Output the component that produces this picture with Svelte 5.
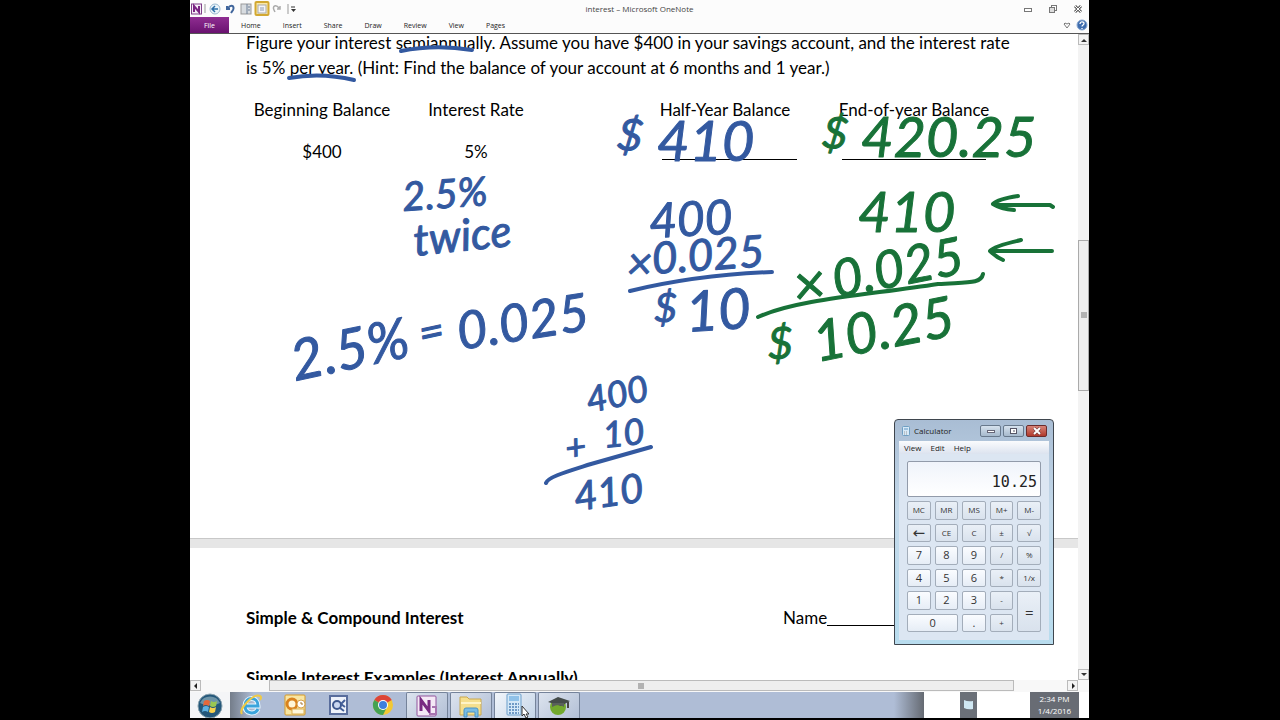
<script>
  const tabs = ["Home", "Insert", "Share", "Draw", "Review", "View", "Pages"];

  const keys = [
    { label: "MC" }, { label: "MR" }, { label: "MS" }, { label: "M+" }, { label: "M-" },
    { label: "←", kind: "back" }, { label: "CE" }, { label: "C" }, { label: "±" }, { label: "√" },
    { label: "7", kind: "digit" }, { label: "8", kind: "digit" }, { label: "9", kind: "digit" }, { label: "/" }, { label: "%" },
    { label: "4", kind: "digit" }, { label: "5", kind: "digit" }, { label: "6", kind: "digit" }, { label: "*" }, { label: "1/x" },
    { label: "1", kind: "digit" }, { label: "2", kind: "digit" }, { label: "3", kind: "digit" }, { label: "-" }, { label: "=", kind: "equals" },
    { label: "0", kind: "digit zero" }, { label: ".", kind: "digit" }, { label: "+" },
  ];

  // pen notes: baseline start, size and slant
  const blue = [
    { t: "$", x: 616, y: 149, s: 44, r: 6 },
    { t: "410", x: 657, y: 161, s: 56, r: 0 },
    { t: "2.5%", x: 403, y: 211, s: 40, r: -4 },
    { t: "twice", x: 415, y: 256, s: 44, r: -6 },
    { t: "400", x: 650, y: 238, s: 48, r: -3 },
    { t: "×", x: 627, y: 279, s: 44, r: 0 },
    { t: "0.025", x: 653, y: 274, s: 44, r: -4 },
    { t: "$", x: 654, y: 322, s: 40, r: 0 },
    { t: "10", x: 687, y: 332, s: 56, r: -4 },
    { t: "2.5%", x: 295, y: 381, s: 56, r: -12 },
    { t: "=", x: 422, y: 349, s: 44, r: -12 },
    { t: "0.025", x: 460, y: 350, s: 52, r: -9 },
    { t: "400", x: 589, y: 413, s: 36, r: -12 },
    { t: "10", x: 604, y: 448, s: 36, r: -6 },
    { t: "+", x: 567, y: 461, s: 36, r: -8 },
    { t: "410", x: 576, y: 511, s: 40, r: -8 },
  ];
  const green = [
    { t: "$", x: 821, y: 147, s: 44, r: 6 },
    { t: "420.25", x: 861, y: 157, s: 56, r: 0 },
    { t: "410", x: 858, y: 232, s: 56, r: 0 },
    { t: "×", x: 796, y: 306, s: 56, r: -8 },
    { t: "0.025", x: 836, y: 298, s: 52, r: -11 },
    { t: "$", x: 768, y: 359, s: 44, r: -2 },
    { t: "10.25", x: 817, y: 362, s: 56, r: -11 },
  ];
</script>

{#snippet notes(list)}
  {#each list as n}
    <text x={n.x} y={n.y} font-size={n.s} transform="rotate({n.r} {n.x} {n.y})">{n.t}</text>
  {/each}
{/snippet}

<main class="screen">
  <header class="titlebar">
    <div class="quick">
      <svg width="110" height="16" viewBox="0 0 110 16">
        <rect x="1.500" y="3" width="10" height="10" fill="#f5edf6" stroke="#7f3f88" />
        <path d="M4 11V5l5 6V5" fill="none" stroke="#7a2383" stroke-width="2" />
        <path d="M15 3v9M98 3v10" stroke="#999" />
        <circle cx="25" cy="8" r="5" fill="#eaf4fa" stroke="#9bb9cf" />
        <path d="M28 8h-6m3-3-3 3 3 3" fill="none" stroke="#2d6fa8" stroke-width="1.500" />
        <path d="M37 5v3h3M38 7c3-4 7-2 5 2l-2 3" fill="none" stroke="#41669c" stroke-width="2" />
        <rect x="51" y="3" width="10" height="10" fill="#d8dce0" stroke="#999" />
        <path d="M57 3v10M58 6h2M58 9h2" stroke="#6d7f96" />
        <rect x="65.500" y="1" width="13" height="13" rx="1" fill="#fbe9a8" stroke="#d2a832" stroke-width="2" />
        <rect x="68" y="4" width="8" height="8" fill="#f5f5f8" stroke="#aaa" />
        <path d="M70 7h4M70 9h4" stroke="#8c9ab0" />
        <path d="M90 5v3h-3M89 7c-3-4-7-2-5 2l1 2" fill="none" stroke="#aaa" stroke-width="1.500" />
        <path d="M101 6h4" stroke="#333" />
        <path d="M101 8h5l-2.500 3z" fill="#333" />
      </svg>
    </div>
    <h1>interest – Microsoft OneNote</h1>
    <div class="winbtns">
      <button aria-label="Minimize"><svg width="10" height="10"><rect x="1.500" y="4.500" width="7" height="3" fill="#fff" stroke="#777" /></svg></button>
      <button aria-label="Restore"><svg width="10" height="10"><rect x="3.500" y="1.500" width="5" height="5" fill="#fff" stroke="#777" /><rect x="1.500" y="3.500" width="5" height="5" fill="#ddd" stroke="#777" /></svg></button>
      <button aria-label="Close"><svg width="10" height="10"><path d="m2 2 6 6M8 2 2 8" stroke="#666" stroke-width="3" /><path d="m2 2 6 6M8 2 2 8" stroke="#fff" /></svg></button>
    </div>
  </header>

  <nav class="ribbon">
    <button class="file">File</button>
    {#each tabs as tab}
      <button class="tab">{tab}</button>
    {/each}
    <div class="help">
      <button aria-label="Show ribbon"><svg width="10" height="10"><path d="m2 4 1-1 2 1 2-1 1 1-3 4z" fill="#fff" stroke="#777" /></svg></button>
      <button aria-label="Help"><svg width="12" height="12"><circle cx="6" cy="6" r="5" fill="#3f6dae" stroke="#8aa8d0" /><path d="M4 5c0-3 4-2.500 4-.5C8 6 6 6 6 7.500M6 9v1" fill="none" stroke="#fff" stroke-width="1.300" /></svg></button>
    </div>
  </nav>

  <div class="workspace">
    <div class="document">
      <section class="page first">
        <p>
          Figure your interest semiannually. Assume you have $400 in your savings account, and the interest rate<br />
          is 5% per year. (Hint: Find the balance of your account at 6 months and 1 year.)
        </p>
        <table>
          <thead>
            <tr><th class="begin">Beginning Balance</th><th class="rate">Interest Rate</th><th class="half">Half-Year Balance</th><th>End-of-year Balance</th></tr>
          </thead>
          <tbody>
            <tr><td>$400</td><td>5%</td><td class="half"><span class="blank"></span></td><td><span class="blank wide"></span></td></tr>
          </tbody>
        </table>
      </section>
      <section class="page second">
        <div class="heading">
          <h2>Simple &amp; Compound Interest</h2>
          <span class="name">Name<span class="name-line"></span></span>
        </div>
        <h2>Simple Interest Examples (Interest Annually)</h2>
      </section>

      <svg class="ink" width="888" height="646" viewBox="190 34 888 646">
        <g class="blue">
          {@render notes(blue)}
          <path d="M401 51q34-7 71-1M289 78q32-6 65 2" />
          <path d="M630 291q66-16 142-19M546 483c2-6 20-11 45-19l60-17" />
        </g>
        <g class="green">
          {@render notes(green)}
          <path d="M758 317c40-18 110-22 180-33 30-2 43 0 45-10" />
          <path d="M1053 207l-3-2h-54M1018 196q-20 3-25 8 8 5 21 6M1052 251h-60M1021 240q-27 6-31 11 6 6 13 9" />
        </g>
      </svg>
    </div>

    <div class="vscroll">
      <button aria-label="Scroll up"><svg width="8" height="8"><path d="m1 6 3-3 3 3z" fill="#333" /></svg></button>
      <div class="vthumb"><svg width="6" height="7"><path d="M0 1h6M0 3h6M0 5h6" stroke="#777" /></svg></div>
      <button aria-label="Scroll down"><svg width="8" height="8"><path d="m1 2 3 3 3-3z" fill="#333" /></svg></button>
    </div>

    <aside class="calculator">
      <div class="calc-title">
        <svg width="8" height="10"><rect x=".5" y=".5" width="7" height="9" rx="1" fill="#d7eaf8" stroke="#6f9fc2" /><path d="M2 3h4" stroke="#9cc0de" stroke-width="2" /><path d="M2 6h4M2 8h4" stroke="#999" stroke-dasharray="1 1" /></svg>
        <span>Calculator</span>
        <button class="min" aria-label="Minimize calculator"><svg width="10" height="8"><rect x="1.500" y="3.500" width="7" height="2" fill="#fff" stroke="#667" /></svg></button>
        <button aria-label="Maximize calculator"><svg width="10" height="8"><rect x="1.500" y="1.500" width="6" height="5" fill="#fff" stroke="#556" /><path d="M4 4h2" stroke="#556" /></svg></button>
        <button class="close" aria-label="Close calculator"><svg width="10" height="8"><path d="m2 1 6 6M8 1 2 7" stroke="#633" stroke-width="3" /><path d="m2 1 6 6M8 1 2 7" stroke="#fff" stroke-width="2" /></svg></button>
      </div>
      <div class="calc-menu"><button>View</button><button>Edit</button><button>Help</button></div>
      <div class="calc-body">
        <output>10.25</output>
        <div class="keys">
          {#each keys as key}
            <button class={key.kind}>{key.label}</button>
          {/each}
        </div>
      </div>
    </aside>
  </div>

  <div class="hscroll">
    <button aria-label="Scroll left"><svg width="8" height="8"><path d="M5 1 2 4l3 3z" fill="#222" /></svg></button>
    <div class="htrack"><div class="hthumb"><svg width="7" height="6"><path d="M1 0v6M3 0v6M5 0v6" stroke="#777" /></svg></div></div>
    <button aria-label="Scroll right"><svg width="8" height="8"><path d="m3 1 3 3-3 3z" fill="#222" /></svg></button>
  </div>

  <footer class="taskbar">
    <button class="start" aria-label="Start">
      <svg width="26" height="26" viewBox="0 0 26 26">
        <circle cx="13" cy="14" r="12" fill="#24577a" stroke="#8ba3b0" />
        <path d="M3 11a11 11 0 0 1 20 0q-10 5-20 0" fill="#6e94a8" />
        <path d="M7 9q3-2 6 0l-1 5q-3-2-6 0z" fill="#e5683b" />
        <path d="M14 9q3 2 6 0l-1 5q-3 2-6 0z" fill="#9bc851" />
        <path d="M6 15q3-2 6 0l-1 5q-3-2-6 0z" fill="#5fb1e2" />
        <path d="M13 15q3 2 6 0l-1 5q-3 2-6 0z" fill="#f7d04c" />
      </svg>
    </button>
    <div class="apps">
      <button aria-label="Internet Explorer">
        <svg width="24" height="24" viewBox="0 0 24 24">
          <path d="M6 13h13c0-10-13-10-13 0 0 8 10 9 13 3" fill="none" stroke="#e6f6ff" stroke-width="5" />
          <path d="M6 13h13c0-10-13-10-13 0 0 8 10 9 13 3" fill="none" stroke="#3ba4dc" stroke-width="3" />
          <path d="M3 21C-1 16 15 0 21 3q2 1 0 4" fill="none" stroke="#f0ca45" stroke-width="2" />
        </svg>
      </button>
      <button aria-label="Outlook">
        <svg width="24" height="24" viewBox="0 0 24 24">
          <rect x="2" y="2" width="20" height="20" rx="1" fill="#f8e5a2" stroke="#d69a29" />
          <circle cx="9" cy="11" r="5" fill="#fff6d7" stroke="#d9821e" stroke-width="3" />
          <circle cx="18" cy="11" r="4" fill="#fff" stroke="#d6a24e" />
          <path d="M18 9v2h2" fill="none" stroke="#a87936" /><path d="M9 16h12v5H9z" fill="#fff8dc" stroke="#d9ae52" />
        </svg>
      </button>
      <button aria-label="Snipping tool">
        <svg width="22" height="22" viewBox="0 0 22 22">
          <rect x="2" y="2" width="17" height="18" fill="#eef2fa" stroke="#596d9c" stroke-width="2" />
          <circle cx="9" cy="11" r="4" fill="#cad7f0" stroke="#3f588e" stroke-width="2" />
          <path d="m12 14 4 3M13 10l4-4M13 10l4 3" stroke="#445f98" stroke-width="2" />
        </svg>
      </button>
      <button aria-label="Chrome">
        <svg width="22" height="22" viewBox="0 0 22 22">
          <circle cx="11" cy="11" r="10" fill="#f2c834" />
          <path d="M11 11 2.300 6A10 10 0 0 1 19.700 6z" fill="#dc4437" />
          <path d="M11 11 2.300 6A10 10 0 0 0 11 21l4-8z" fill="#45a252" />
          <circle cx="11" cy="11" r="5" fill="#fff" /><circle cx="11" cy="11" r="4" fill="#3e7fdc" />
        </svg>
      </button>
      <button class="open" aria-label="OneNote">
        <svg width="22" height="22" viewBox="0 0 22 22">
          <rect x="1" y="1" width="19" height="20" rx="1" fill="#f4e8f5" stroke="#91559c" />
          <path d="M5 16V5l8 11V5" fill="none" stroke="#782982" stroke-width="3" />
          <path d="M16 12h4v7h-7" fill="none" stroke="#a774af" stroke-width="2" />
        </svg>
      </button>
      <button class="open" aria-label="File Explorer">
        <svg width="24" height="24" viewBox="0 0 24 24">
          <path d="M1 5V3h7l2 2h12v16H1z" fill="#f5df8e" stroke="#c9a850" />
          <path d="M2 9h20" stroke="#fff4c7" stroke-width="2" />
          <path d="M5 23v-7q0-2 2-2h10q2 0 2 2v7h-3v-5H8v5z" fill="#79bce4" stroke="#4a92c4" />
        </svg>
      </button>
      <button class="open active" aria-label="Calculator">
        <svg width="28" height="25" viewBox="0 0 28 25">
          <rect x="6" y="1" width="14" height="21" rx="1" fill="#d3e7f7" stroke="#6d9fcb" />
          <rect x="8" y="3" width="10" height="5" fill="#8fc1e8" />
          <path d="M8 11h10M8 14h10M8 17h10M8 20h10" stroke="#6f9ac6" stroke-width="2" stroke-dasharray="2 1" />
          <path d="M21 13v10l2-2 2 4 2-1-2-3h3z" fill="#fff" stroke="#333" />
        </svg>
      </button>
      <button class="open" aria-label="Classroom">
        <svg width="24" height="24" viewBox="0 0 24 24">
          <circle cx="11" cy="13" r="8" fill="#73a92d" />
          <path d="m1 8 10-5 12 4-9 5z" fill="#454c4a" /><path d="M5 9v4q7-4 12 0V9" fill="#59605b" /><path d="M21 8v6" stroke="#444" stroke-width="2" />
        </svg>
      </button>
    </div>
    <div class="flag"><svg width="12" height="12"><path d="M1 1q4 2 9 1v8q-5 1-9-1z" fill="#cfe7f2" /></svg></div>
    <div class="clock"><span>2:34 PM</span><span>1/4/2016</span></div>
  </footer>
</main>

<style>
  :global(body) {
    margin: 0;
    background: #000;
  }

  .screen {
    display: flex;
    flex-direction: column;
    box-sizing: border-box;
    width: 100%;
    max-width: 900px;
    height: 100vh;
    margin: 0 auto;
    border-right: 1px solid #000;
    border-bottom: 2px solid #000;
    background: #fff;
    color: #000;
    font-family: "Open Sans", sans-serif;
    overflow: hidden;
  }

  button {
    display: flex;
    align-items: center;
    justify-content: center;
    margin: 0;
    padding: 0;
    border: 0;
    background: none;
    color: inherit;
    font: inherit;
  }

  .titlebar {
    display: grid;
    grid-template-columns: 1fr auto 1fr;
    align-items: center;
    height: 17px;
    flex-shrink: 0;
    background: #fcfcfc;
  }

  .quick {
    display: flex;
  }

  .titlebar h1 {
    margin: 0;
    font-size: 8px;
    line-height: 12px;
    font-weight: 400;
    color: #444;
  }

  .winbtns {
    display: flex;
    justify-content: flex-end;
    gap: 15px;
    padding-right: 6px;
  }

  .ribbon {
    display: flex;
    height: 16px;
    flex-shrink: 0;
    border-bottom: 1px solid #555;
    background: #fcfcfc;
    font-size: 7px;
    color: #222;
  }

  .file {
    width: 39px;
    margin-right: 12px;
    background: linear-gradient(#8f2d91, #6a1270);
    color: #fff;
  }

  .tab {
    margin-right: 22px;
  }

  .help {
    display: flex;
    gap: 4px;
    margin-left: auto;
    padding-right: 1px;
  }

  .workspace {
    position: relative;
    display: flex;
    flex: 1;
    min-height: 0;
  }

  .document {
    position: relative;
    flex: 1;
    min-width: 0;
    overflow: hidden;
    font-family: Lato, sans-serif;
    font-size: 17px;
    line-height: 25px;
  }

  .page {
    box-sizing: border-box;
    padding-left: 56px;
    white-space: nowrap;
  }

  .first {
    height: 505px;
    border-bottom: 1px solid #c8c8c8;
  }

  .first p {
    position: relative;
    top: -4px;
    margin: 0;
  }

  table {
    width: 772px;
    margin-top: 4px;
    border-collapse: collapse;
    table-layout: fixed;
    text-align: center;
  }

  th,
  td {
    height: 42px;
    padding: 0;
    font-size: 17px;
    font-weight: 400;
  }

  .begin {
    width: 152px;
  }

  .rate {
    width: 156px;
  }

  .half {
    width: 170px;
    padding-left: 86px;
  }

  .blank {
    display: inline-block;
    width: 135px;
    height: 22px;
    border-bottom: 1px solid #000;
  }

  .half .blank {
    margin-left: 8px;
  }

  .blank.wide {
    width: 144px;
  }

  .second {
    border-top: 9px solid #e6e6e6;
    padding-top: 57px;
  }

  .heading {
    display: flex;
    margin-bottom: 35px;
  }

  .heading h2 {
    width: 537px;
  }

  h2 {
    margin: 0;
    font-size: 17px;
    font-weight: 700;
  }

  .name {
    display: flex;
  }

  .name-line {
    width: 160px;
    height: 20px;
    border-bottom: 1px solid #000;
  }

  .ink {
    position: absolute;
    top: 0;
    left: 0;
    font-family: Lato, sans-serif;
    pointer-events: none;
  }

  .ink path {
    fill: none;
    stroke-width: 4;
    stroke-linecap: round;
    stroke-linejoin: round;
  }

  .blue {
    fill: #3359a0;
    stroke: #3359a0;
  }

  .green {
    fill: #187238;
    stroke: #187238;
  }

  .ink text {
    font-style: italic;
    stroke-width: 1;
    stroke-linejoin: round;
  }

  .vscroll {
    display: flex;
    flex-direction: column;
    width: 11px;
    background: #f3f3f3;
  }

  .vscroll button,
  .hscroll button {
    box-sizing: border-box;
    width: 11px;
    height: 11px;
    flex-shrink: 0;
    border: 1px solid #bbb;
    background: #f4f4f4;
  }

  .vthumb {
    display: flex;
    align-items: center;
    justify-content: center;
    box-sizing: border-box;
    height: 151px;
    margin: 195px 0 auto;
    border: 1px solid #aaa;
    background: #eee;
  }

  .hscroll {
    display: flex;
    height: 12px;
    flex-shrink: 0;
    padding-right: 11px;
    background: #f8f8f8;
  }

  .htrack {
    flex: 1;
    padding: 0 53px 0 68px;
  }

  .hthumb {
    display: flex;
    align-items: center;
    justify-content: center;
    box-sizing: border-box;
    height: 11px;
    border: 1px solid #bbb;
    background: #eee;
  }

  .calculator {
    position: absolute;
    top: 385px;
    right: 35px;
    box-sizing: border-box;
    width: 160px;
    padding: 0 4px 4px;
    border: 1px solid #3f464e;
    border-radius: 4px 4px 0 0;
    background: linear-gradient(#a9bdd4, #c4d9ea 40%, #b8dcee);
  }

  .calc-title {
    display: flex;
    align-items: center;
    gap: 2px;
    height: 21px;
    padding: 0 2px 0 3px;
    font-size: 8px;
    color: #222;
  }

  .calc-title span {
    flex: 1;
    margin-left: 2px;
  }

  .calc-title button {
    box-sizing: border-box;
    width: 21px;
    height: 12px;
    border: 1px solid #68798c;
    border-radius: 2px;
    background: linear-gradient(#d6e2ee, #a6b9cc);
  }

  .calc-title .close {
    border-color: #6b2c2c;
    background: linear-gradient(#d78378, #b03a2c);
  }

  .calc-menu {
    display: flex;
    gap: 9px;
    height: 13px;
    padding-left: 5px;
    background: linear-gradient(#fafbfd, #dce3ef);
    font-size: 8px;
    line-height: 12px;
    color: #222;
  }

  .calc-body {
    padding: 7px 8px 8px;
    background: #dce6f2;
  }

  output {
    display: flex;
    align-items: flex-end;
    justify-content: flex-end;
    box-sizing: border-box;
    height: 36px;
    padding: 0 3px 4px;
    border: 1px solid #929baa;
    border-radius: 2px;
    background: linear-gradient(#f0f4fb, #fff);
    font: 15px/20px "DejaVu Sans Mono", monospace;
    color: #222;
  }

  .keys {
    display: grid;
    grid-template-columns: repeat(5, 1fr);
    grid-template-rows: repeat(6, 1fr);
    gap: 4px;
    height: 131px;
    margin-top: 4px;
  }

  .keys button {
    min-width: 0;
    min-height: 0;
    border: 1px solid #a3adba;
    border-radius: 2px;
    background: linear-gradient(#eaf0f7, #d9e2ed);
    font-size: 8px;
    line-height: 12px;
    color: #333;
  }

  .keys .digit {
    background: linear-gradient(#fafcff, #e6edf6);
    font-size: 11px;
  }

  .keys .back {
    font-family: "DejaVu Sans", sans-serif;
    font-size: 15px;
  }

  .keys .zero {
    grid-column: span 2;
  }

  .keys .equals {
    grid-row: span 2;
    font-size: 15px;
  }

  .taskbar {
    display: flex;
    height: 26px;
    flex-shrink: 0;
    background: #fff;
  }

  .start {
    width: 40px;
    background: #f4f5f7;
  }

  .apps {
    display: flex;
    flex: 1;
    gap: 2px;
    background: linear-gradient(90deg, #747d8a, #afbdd6 24px, #afbdd6 calc(100% - 30px), #656a72);
  }

  .apps button {
    box-sizing: border-box;
    width: 42px;
    overflow: hidden;
  }

  .apps .open {
    border: 1px solid #75839a;
    border-bottom: 0;
    border-radius: 2px 2px 0 0;
    background: linear-gradient(135deg, #dce3ee, #b3c0d6);
  }

  .apps .active {
    background: linear-gradient(135deg, #f1f5fa, #c5d5e8);
  }

  .flag {
    display: flex;
    align-items: center;
    justify-content: center;
    width: 17px;
    margin: 0 53px 0 36px;
    background: #6b7078;
  }

  .clock {
    display: flex;
    flex-direction: column;
    align-items: center;
    justify-content: center;
    width: 49px;
    margin-right: 10px;
    background: #686c74;
    font-size: 8px;
    line-height: 12px;
    color: #fff;
  }
</style>
